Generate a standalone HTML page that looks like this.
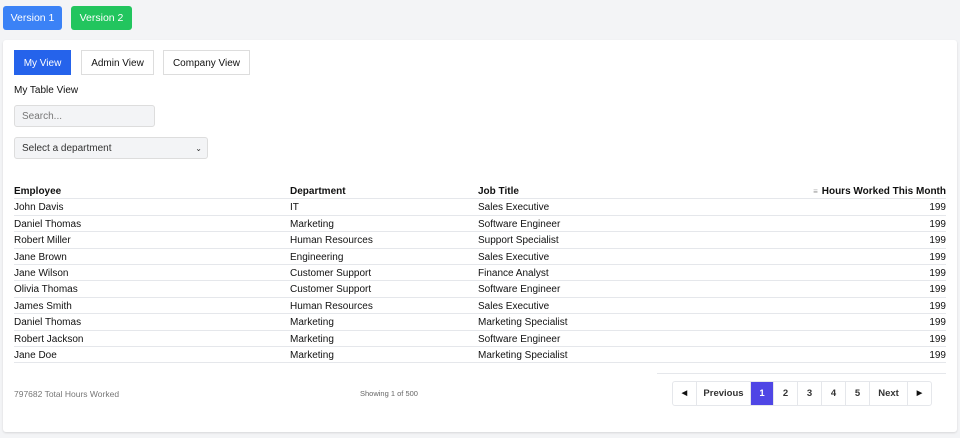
<!DOCTYPE html>
<html><head><style>
*{box-sizing:border-box;margin:0;padding:0}
body{width:960px;height:438px;background:#f3f4f6;font-family:"Liberation Sans",sans-serif;font-size:10px;color:#111;position:relative;overflow:hidden}
.abs{position:absolute}
.vbtn{position:absolute;top:6px;height:24px;border-radius:3px;color:#fff;font-size:10.5px;line-height:25px;text-align:center}
.card{position:absolute;left:3px;top:40px;width:954px;height:392px;background:#fff;border-radius:3px;box-shadow:0 1px 2px rgba(0,0,0,.12)}
.tab{position:absolute;top:50px;height:25px;line-height:25px;font-size:10px;text-align:center;border:1px solid #ddd;background:#fff}
.tbl{position:absolute;left:14px;top:183px;width:932px}
.row{display:flex;height:16.4px;border-bottom:1px solid #e5e7eb;line-height:14px;padding-top:2px;font-size:10px;overflow:hidden}
.row div{flex:none}
.c1{width:276px}.c2{width:188px}.c3{width:200px}.c4{width:268px;text-align:right}
.h{font-weight:bold}
.pg{position:absolute;left:672px;top:381px;height:25px;display:flex;border:1px solid #e5e7eb;border-radius:3px}
.pg div{height:23px;line-height:24px;text-align:center;font-size:9.5px;font-weight:bold;border-right:1px solid #e5e7eb;color:#333}
.pg div:last-child{border-right:none}
.pg .ar{font-size:7px;color:#111}
</style></head><body>
<div class="vbtn" style="left:3px;width:59px;background:#3b82f6">Version 1</div>
<div class="vbtn" style="left:71px;width:61px;background:#22c55e">Version 2</div>
<div class="card"></div>
<div class="tab" style="left:14px;width:57px;background:#2563eb;color:#fff;border-color:#2563eb">My View</div>
<div class="tab" style="left:81px;width:73px">Admin View</div>
<div class="tab" style="left:163px;width:87px">Company View</div>
<div class="abs" style="left:14px;top:85px;font-size:10px">My Table View</div>
<div class="abs" style="left:14px;top:105px;width:141px;height:22px;background:#f3f4f6;border:1px solid #ddd;border-radius:3px;color:#777;padding-left:7px;line-height:21px">Search...</div>
<div class="abs" style="left:14px;top:137px;width:194px;height:22px;background:#f3f4f6;border:1px solid #ddd;border-radius:3px;color:#333;padding-left:7px;line-height:21px">Select a department<span style="position:absolute;right:5px;top:0;font-size:8px">&#8964;</span></div>
<div class="tbl">
<div class="row h"><div class="c1">Employee</div><div class="c2">Department</div><div class="c3">Job Title</div><div class="c4"><span style="color:#999;font-size:8px;margin-right:4px">&#8801;</span>Hours Worked This Month</div></div>
<div class="row"><div class="c1">John Davis</div><div class="c2">IT</div><div class="c3">Sales Executive</div><div class="c4">199</div></div>
<div class="row"><div class="c1">Daniel Thomas</div><div class="c2">Marketing</div><div class="c3">Software Engineer</div><div class="c4">199</div></div>
<div class="row"><div class="c1">Robert Miller</div><div class="c2">Human Resources</div><div class="c3">Support Specialist</div><div class="c4">199</div></div>
<div class="row"><div class="c1">Jane Brown</div><div class="c2">Engineering</div><div class="c3">Sales Executive</div><div class="c4">199</div></div>
<div class="row"><div class="c1">Jane Wilson</div><div class="c2">Customer Support</div><div class="c3">Finance Analyst</div><div class="c4">199</div></div>
<div class="row"><div class="c1">Olivia Thomas</div><div class="c2">Customer Support</div><div class="c3">Software Engineer</div><div class="c4">199</div></div>
<div class="row"><div class="c1">James Smith</div><div class="c2">Human Resources</div><div class="c3">Sales Executive</div><div class="c4">199</div></div>
<div class="row"><div class="c1">Daniel Thomas</div><div class="c2">Marketing</div><div class="c3">Marketing Specialist</div><div class="c4">199</div></div>
<div class="row"><div class="c1">Robert Jackson</div><div class="c2">Marketing</div><div class="c3">Software Engineer</div><div class="c4">199</div></div>
<div class="row"><div class="c1">Jane Doe</div><div class="c2">Marketing</div><div class="c3">Marketing Specialist</div><div class="c4">199</div></div>
</div>
<div class="abs" style="left:657px;top:373px;width:289px;height:1px;background:#e5e7eb"></div>
<div class="abs" style="left:14px;top:389px;font-size:8.5px;color:#777">797682 Total Hours Worked</div>
<div class="abs" style="left:360px;top:389px;font-size:7.5px;color:#666">Showing 1 of 500</div>
<div class="pg">
<div class="ar" style="width:24px">&#9664;</div>
<div style="width:54px">Previous</div>
<div style="width:23px;background:#4f46e5;color:#fff">1</div>
<div style="width:24px">2</div>
<div style="width:24px">3</div>
<div style="width:24px">4</div>
<div style="width:24px">5</div>
<div style="width:38px">Next</div>
<div class="ar" style="width:23px">&#9654;</div>
</div>
</body></html>
